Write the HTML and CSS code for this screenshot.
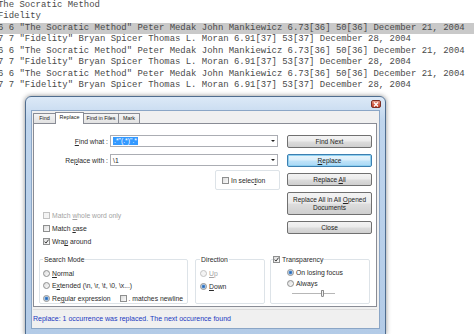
FILE: index.html
```html
<!DOCTYPE html>
<html lang="en">
<head>
    <meta charset="UTF-8">
    <meta name="viewport" content="width=device-width, initial-scale=1.0">
    <title>Replace</title>
    <link rel="stylesheet" href="styles.css">
</head>
<body>
    <!-- Editor text behind the dialog -->
    <div class="editor">
        <div class="line">The Socratic Method</div>
        <div class="line">Fidelity</div>
        <div class="line current">6 6 "The Socratic Method" Peter Medak John Mankiewicz 6.73[36] 50[36] December 21, 2004</div>
        <div class="line">7 7 "Fidelity" Bryan Spicer Thomas L. Moran 6.91[37] 53[37] December 28, 2004</div>
        <div class="line">6 6 "The Socratic Method" Peter Medak John Mankiewicz 6.73[36] 50[36] December 21, 2004</div>
        <div class="line">7 7 "Fidelity" Bryan Spicer Thomas L. Moran 6.91[37] 53[37] December 28, 2004</div>
        <div class="line">6 6 "The Socratic Method" Peter Medak John Mankiewicz 6.73[36] 50[36] December 21, 2004</div>
        <div class="line">7 7 "Fidelity" Bryan Spicer Thomas L. Moran 6.91[37] 53[37] December 28, 2004</div>
    </div>

    <!-- Replace dialog -->
    <div class="dialog">
        <span class="close-btn">
            <svg width="6" height="5" viewBox="0 0 6 5"><path d="M1 0.5 L5 4.5 M5 0.5 L1 4.5" stroke="#fff" stroke-width="1.3"/></svg>
        </span>
        <div class="client">
            <div class="tabs">
                <span class="tab t-find">Find</span>
                <span class="tab t-replace active">Replace</span>
                <span class="tab t-files">Find in Files</span>
                <span class="tab t-mark">Mark</span>
            </div>
            <div class="panel">
                <div class="top">
                    <div class="fields">
                        <div class="field">
                            <label><u>F</u>ind what :</label>
                            <div class="combo"><span class="sel">.*"(.*)".*</span><i class="arrow"></i></div>
                        </div>
                        <div class="field">
                            <label>Re<u>p</u>lace with :</label>
                            <div class="combo"><span class="val">\1</span><i class="arrow"></i></div>
                        </div>
                        <div class="insel"><span class="cb"></span><span>In selec<u>t</u>ion</span></div>
                        <div class="checks">
                            <div class="check disabled"><span class="cb"></span><span>Match <u>w</u>hole word only</span></div>
                            <div class="check"><span class="cb"></span><span>Match <u>c</u>ase</span></div>
                            <div class="check"><span class="cb on"><svg width="5" height="5" viewBox="0 0 5 5"><path d="M0.5 2.6 L2 4.1 L4.6 0.6" fill="none" stroke="#3a3a3a" stroke-width="1"/></svg></span><span>Wra<u>p</u> around</span></div>
                        </div>
                    </div>
                    <div class="buttons">
                        <button>Find Next</button>
                        <button class="default"><u>R</u>eplace</button>
                        <button>Replace <u>A</u>ll</button>
                        <button class="tall">Replace All in All <u>O</u>pened<br>Documents</button>
                        <button>Close</button>
                    </div>
                </div>
                <div class="groups">
                    <fieldset class="g-mode">
                        <legend>Search Mode</legend>
                        <div class="opts">
                            <div class="opt"><span class="rd"></span><span><u>N</u>ormal</span></div>
                            <div class="opt"><span class="rd"></span><span>E<u>x</u>tended (\n, \r, \t, \0, \x...)</span></div>
                            <div class="opt"><span class="rd on"></span><span>Re<u>g</u>ular expression</span><span class="cb newline"></span><span>. matches newline</span></div>
                        </div>
                    </fieldset>
                    <fieldset class="g-dir">
                        <legend>Direction</legend>
                        <div class="opts">
                            <div class="opt disabled"><span class="rd"></span><span><u>U</u>p</span></div>
                            <div class="opt"><span class="rd on"></span><span><u>D</u>own</span></div>
                        </div>
                    </fieldset>
                    <fieldset class="g-trans">
                        <legend><span class="cb on"><svg width="5" height="5" viewBox="0 0 5 5"><path d="M0.5 2.6 L2 4.1 L4.6 0.6" fill="none" stroke="#3a3a3a" stroke-width="1"/></svg></span><span>Transparency</span></legend>
                        <div class="opts">
                            <div class="opt"><span class="rd on"></span><span>On losing focus</span></div>
                            <div class="opt"><span class="rd"></span><span>Always</span></div>
                        </div>
                        <div class="slider"><span class="thumb"></span></div>
                    </fieldset>
                </div>
            </div>
            <div class="status">Replace: 1 occurrence was replaced. The next occurence found</div>
        </div>
    </div>
</body>
</html>
```

FILE: styles.css
```css
* {
    box-sizing: border-box;
}
body {
    margin: 0;
    background-color: #fff;
    font-family: "Liberation Sans", Arial, sans-serif;
    overflow: hidden;
}
u {
    text-decoration-thickness: 0.5px;
}

/* editor */
.editor {
    margin-top: -0.5px;
    font-family: "Liberation Mono", "Courier New", monospace;
    font-size: 8.95px;
    line-height: 11.5px;
    color: #4a4a4a;
}
.line {
    margin-left: -2px;
    white-space: pre;
}
.line.current {
    background-color: #c9c9c9;
}

/* dialog window */
.dialog {
    position: absolute;
    left: 25px;
    top: 96px;
    width: 361px;
    height: 239px;
    padding: 13px 5px 5px;
    border: 1px solid #4f6d8f;
    border-radius: 6px 6px 0 0;
    background: linear-gradient(#dce9f7, #bfd5ed 10%, #b3cbe7);
    box-shadow: 0 0 5px rgba(0, 0, 0, 0.45);
}
.close-btn {
    position: absolute;
    top: 3px;
    right: 4px;
    width: 10px;
    height: 8px;
    border: 1px solid #7d2f25;
    border-radius: 2px;
    background: linear-gradient(#eba190, #d4604a 50%, #c23b22);
    display: flex;
    align-items: center;
    justify-content: center;
}
.client {
    height: 100%;
    display: flex;
    flex-direction: column;
    border: 1px solid #8ba6c6;
    background-color: #f0f0f0;
    padding: 2px 2px 0 1px;
}

/* tabs */
.tabs {
    display: flex;
    align-items: flex-end;
    height: 10px;
    font-size: 5.4px;
    color: #222;
}
.tab {
    height: 10px;
    line-height: 8px;
    text-align: center;
    border: 1px solid #898c95;
    border-bottom: none;
    border-radius: 1px 1px 0 0;
    background: linear-gradient(#f4f4f4, #e2e2e2);
    margin-right: -1px;
}
.tab.active {
    height: 12px;
    margin-bottom: -1px;
    line-height: 9px;
    background: #fff;
    position: relative;
    z-index: 1;
}
.t-find { width: 23px; }
.t-replace { width: 29px; }
.t-files { width: 36px; }
.t-mark { width: 22px; }

.panel {
    height: 186px;
    border: 1px solid #898c95;
    background-color: #fff;
    font-size: 6.8px;
    color: #2b2b2b;
}
.top {
    display: flex;
    padding-top: 11px;
}
.fields {
    width: 246px;
}
.field {
    display: flex;
    align-items: center;
    height: 12px;
}
.field + .field {
    margin-top: 7px;
}
.field label {
    width: 74px;
    margin-right: 2px;
    text-align: right;
}
.combo {
    width: 168px;
    height: 12px;
    display: flex;
    align-items: center;
    border: 1px solid #abadb3;
    background-color: #fff;
}
.sel {
    margin-left: 2px;
    padding: 0 1px;
    line-height: 8px;
    background-color: #3399ff;
    color: #fff;
}
.val {
    margin-left: 2px;
}
.arrow {
    margin-left: auto;
    margin-right: 2px;
    border-left: 2px solid transparent;
    border-right: 2px solid transparent;
    border-top: 2px solid #222;
}
.insel {
    margin: 4px 0 0 181px;
    width: 65px;
    height: 20px;
    display: flex;
    align-items: center;
    padding-left: 6px;
    border: 1px solid #dde3e8;
    border-radius: 2px;
}
.checks {
    margin-top: 19px;
    padding-left: 9px;
}
.check, .opt {
    display: flex;
    align-items: center;
    white-space: nowrap;
}
.check {
    height: 13px;
}
.disabled {
    color: #a3a3a3;
}

/* checkbox and radio */
.cb {
    width: 7px;
    height: 7px;
    flex: none;
    margin-right: 2px;
    border: 1px solid #8e8f8f;
    background: linear-gradient(135deg, #dcdcdc, #fbfbfb);
    display: flex;
    align-items: center;
    justify-content: center;
}
.disabled .cb {
    border-color: #c2c2c2;
    background: #f4f4f4;
}
.rd {
    width: 7px;
    height: 7px;
    flex: none;
    margin-right: 2px;
    border: 1px solid #8e8f8f;
    border-radius: 50%;
    background: linear-gradient(135deg, #dcdcdc, #fbfbfb);
}
.rd.on {
    background: radial-gradient(circle, #2a64b0 0, #4a8ad0 1.4px, #c9d8ea 2.2px, #f5f5f5 3px);
}
.disabled .rd {
    border-color: #c2c2c2;
    background: #f4f4f4;
}

/* buttons */
.buttons {
    margin-left: 7px;
    width: 85px;
    display: flex;
    flex-direction: column;
    gap: 6px;
}
button {
    height: 13px;
    padding: 0;
    font-family: "Liberation Sans", Arial, sans-serif;
    font-size: 6.5px;
    line-height: 8px;
    color: #222;
    border: 1px solid #707070;
    border-radius: 2px;
    background: linear-gradient(#f3f3f3, #ebebeb 48%, #dddddd 52%, #cfcfcf);
}
button.default {
    border-color: #3c7fb1;
    background: linear-gradient(#e9f5fc, #d9eefb 48%, #bfe3f8 52%, #a9d8f6);
    box-shadow: inset 0 0 0 1px #8fd0f0;
}
button.tall {
    height: 23px;
    padding: 0 2px;
}

/* group boxes */
.groups {
    display: flex;
    margin-top: 7px;
    padding-left: 5px;
}
fieldset {
    margin: 0;
    height: 49px;
    padding: 0 0 0 3px;
    border: 1px solid #dde3e8;
    border-radius: 2px;
}
legend {
    padding: 0 1px;
    line-height: 9px;
    display: flex;
    align-items: center;
}
.g-mode {
    width: 149px;
}
.g-dir {
    width: 70px;
    margin-left: 7px;
    padding-left: 4px;
}
.g-trans {
    width: 100px;
    margin-left: 5px;
    padding-left: 16px;
}
.g-trans legend {
    margin-left: -14px;
    padding: 0;
}
.opts {
    margin-top: 3px;
}
.g-mode .opt {
    height: 12.5px;
}
.g-dir .opt {
    height: 13px;
}
.g-trans .opt {
    height: 11px;
}
.cb.newline {
    margin-left: 9px;
}
.slider {
    position: relative;
    margin: 4px 0 0 5px;
    width: 43px;
    height: 1px;
    background-color: #b7b7b7;
}
.thumb {
    position: absolute;
    left: 29px;
    top: -3px;
    width: 3px;
    height: 7px;
    border: 1px solid #8a8a8a;
    border-radius: 1px 1px 2px 2px;
    background-color: #f4f4f4;
}

/* status line */
.status {
    margin-top: 2px;
    flex: 1;
    border-top: 1px solid #dcdcdc;
    font-size: 7px;
    line-height: 18px;
    color: #2138c0;
    white-space: nowrap;
}
```
